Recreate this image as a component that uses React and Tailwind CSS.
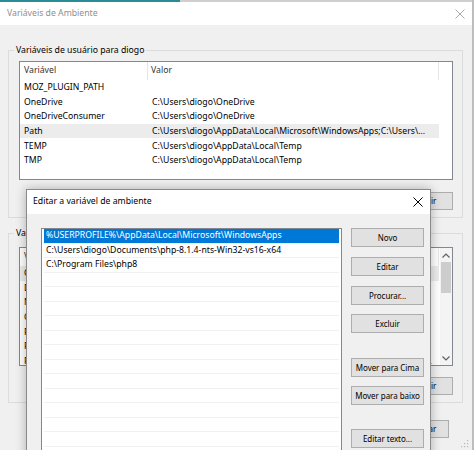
import React from 'react';

const userVars = [
  ['MOZ_PLUGIN_PATH', ''],
  ['OneDrive', 'C:\\Users\\diogo\\OneDrive'],
  ['OneDriveConsumer', 'C:\\Users\\diogo\\OneDrive'],
  ['Path', 'C:\\Users\\diogo\\AppData\\Local\\Microsoft\\WindowsApps;C:\\Users\\...'],
  ['TEMP', 'C:\\Users\\diogo\\AppData\\Local\\Temp'],
  ['TMP', 'C:\\Users\\diogo\\AppData\\Local\\Temp'],
];

const systemVars = [
  ['ComSpec', 'C:\\WINDOWS\\system32\\cmd.exe'],
  ['DriverData', 'C:\\Windows\\System32\\Drivers\\DriverData'],
  ['NUMBER_OF_PROCESSORS', '8'],
  ['OS', 'Windows_NT'],
  ['PATHEXT', '.COM;.EXE;.BAT;.CMD;.VBS;.VBE;.JS;.JSE;.WSF;.WSH;.MSC'],
  ['PROCESSOR_ARCHITECTURE', 'AMD64'],
  ['PSModulePath', '%ProgramFiles%\\WindowsPowerShell\\Modules;C:\\WINDOWS\\system32\\WindowsPowerShell\\v1.0\\Modules'],
];

const pathEntries = [
  '%USERPROFILE%\\AppData\\Local\\Microsoft\\WindowsApps',
  'C:\\Users\\diogo\\Documents\\php-8.1.4-nts-Win32-vs16-x64',
  'C:\\Program Files\\php8',
];

const CloseIcon = ({ className }) => (
  <svg viewBox="0 0 10 10" className={className} fill="none" stroke="currentColor" strokeWidth="1">
    <path d="M0.5 0.5 L9.5 9.5 M9.5 0.5 L0.5 9.5" />
  </svg>
);

const Chevron = ({ up }) => (
  <svg viewBox="0 0 8 5" className="h-[5px] w-[8px]" fill="none" stroke="#606060" strokeWidth="1.2">
    <path d={up ? 'M0.5 4.5 L4 1 L7.5 4.5' : 'M0.5 0.5 L4 4 L7.5 0.5'} />
  </svg>
);

const Button = ({ children, className = '' }) => (
  <button
    className={`flex items-center justify-center whitespace-nowrap border border-[#adadad] bg-[#e1e1e1] text-[8px] tracking-[-0.05px] text-black ${className}`}
  >
    {children}
  </button>
);

const Scrollbar = () => (
  <div className="flex w-[12px] flex-col items-center bg-[#f4f4f4]">
    <div className="flex h-[14px] items-center justify-center">
      <Chevron up />
    </div>
    <div className="h-[31px] w-[10px] bg-[#cdcdcd]" />
    <div className="flex-1" />
    <div className="flex h-[14px] items-center justify-center">
      <Chevron />
    </div>
  </div>
);

const ListView = ({ rows, selected, scroll }) => (
  <div className="flex h-[119px] overflow-hidden border border-[#828790] bg-white">
    <div className="flex min-w-0 flex-1 flex-col">
      <div className="flex h-[18px] shrink-0 text-[#333]">
        <div className="flex w-[128px] items-center border-r border-[#e5e5e5] pl-[4px]">Variável</div>
        <div className="flex w-[291px] items-center border-r border-[#e5e5e5] pl-[3px]">Valor</div>
      </div>
      {rows.map(([name, value], i) => (
        <div
          key={name}
          className={`flex h-[14.6px] w-[419px] shrink-0 items-center leading-[14px] ${i === selected ? 'bg-[#ececec]' : ''}`}
        >
          <div className="w-[128px] truncate pl-[4px]">{name}</div>
          <div className="w-[291px] truncate pl-[4px] pr-[2px]">{value}</div>
        </div>
      ))}
    </div>
    {scroll && <Scrollbar />}
  </div>
);

const GroupBox = ({ label, className = '', children }) => (
  <div className={`relative flex flex-col border border-[#dcdcdc] ${className}`}>
    <span className="absolute left-[5px] top-[-8px] bg-[#f0f0f0] px-[2px] leading-[14px] text-black">{label}</span>
    {children}
  </div>
);

const ResizeGrip = () => (
  <svg viewBox="0 0 8 8" className="absolute bottom-[2px] right-[3px] h-[8px] w-[8px]" fill="#b8b8b8">
    <rect x="6" y="0" width="1.2" height="1.2" />
    <rect x="3" y="3" width="1.2" height="1.2" />
    <rect x="6" y="3" width="1.2" height="1.2" />
    <rect x="0" y="6" width="1.2" height="1.2" />
    <rect x="3" y="6" width="1.2" height="1.2" />
    <rect x="6" y="6" width="1.2" height="1.2" />
  </svg>
);

const EnvWindow = () => (
  <div className="absolute left-0 top-0 flex h-[450px] w-[472px] flex-col bg-[#f0f0f0]">
    <div className="flex h-[2px]">
      <div className="w-[180px] bg-[#2a8c95]" />
      <div className="flex-1 bg-[#cfcfcf]" />
    </div>
    <div className="flex h-[23px] items-center justify-between bg-white pl-[7px] pr-[7px] text-[#8f8f8f]">
      <span>Variáveis de Ambiente</span>
      <CloseIcon className="h-[10px] w-[10px] text-[#a8a8a8]" />
    </div>
    <div className="flex flex-col pl-[8px] pr-[9px] pt-[25px]">
      <GroupBox label="Variáveis de usuário para diogo" className="h-[168px] pl-[10px] pr-[9px] pt-[10px]">
        <ListView rows={userVars} selected={3} />
        <div className="mt-[12px] flex justify-end gap-[6px]">
          <Button className="h-[18px] w-[58px]">Novo...</Button>
          <Button className="h-[18px] w-[58px]">Editar...</Button>
          <Button className="h-[18px] w-[58px]">Excluir</Button>
        </div>
      </GroupBox>
      <GroupBox label="Variáveis do sistema" className="mt-[15px] h-[170px] pl-[10px] pr-[9px] pt-[13px]">
        <ListView rows={systemVars} selected={0} scroll />
        <div className="mt-[11px] flex justify-end gap-[6px]">
          <Button className="h-[18px] w-[58px]">Novo...</Button>
          <Button className="h-[18px] w-[58px]">Editar...</Button>
          <Button className="h-[18px] w-[58px]">Excluir</Button>
        </div>
      </GroupBox>
      <div className="mt-[17px] flex justify-end gap-[6px] pr-[14px]">
        <Button className="h-[18px] w-[58px]">OK</Button>
        <Button className="h-[18px] w-[58px]">Cancelar</Button>
      </div>
    </div>
    <ResizeGrip />
  </div>
);

const EditDialog = () => (
  <div className="absolute left-[26px] top-[189px] flex h-[290px] w-[405px] flex-col border border-[#8a8a8a] bg-[#f0f0f0] shadow-[0_0_10px_rgba(0,0,0,0.28)]">
    <div className="flex h-[24px] shrink-0 items-center justify-between bg-white pl-[6px] pr-[7px] text-black">
      <span>Editar a variável de ambiente</span>
      <CloseIcon className="h-[10px] w-[10px] text-black" />
    </div>
    <div className="flex gap-[9px] pl-[14px] pr-[6px] pt-[14px]">
      <div className="flex h-[250px] min-w-0 flex-1 flex-col border border-[#828790] bg-white px-[2px]">
        {Array.from({ length: 17 }).map((_, i) => (
          <div key={i} className="h-[14.5px] shrink-0 border-b border-[#f0f0f0]">
            {pathEntries[i] && (
              <div
                className={`flex h-full items-center whitespace-nowrap pl-[2px] leading-[13px] ${
                  i === 0 ? 'bg-[#0078d7] text-white' : 'text-black'
                }`}
              >
                {pathEntries[i]}
              </div>
            )}
          </div>
        ))}
      </div>
      <div className="flex w-[73px] shrink-0 flex-col">
        <Button className="h-[19px]">Novo</Button>
        <Button className="mt-[10px] h-[19px]">Editar</Button>
        <Button className="mt-[10px] h-[19px]">Procurar...</Button>
        <Button className="mt-[9px] h-[19px]">Excluir</Button>
        <Button className="mt-[25px] h-[19px]">Mover para Cima</Button>
        <Button className="mt-[9px] h-[19px]">Mover para baixo</Button>
        <Button className="mt-[24px] h-[19px]">Editar texto...</Button>
      </div>
    </div>
  </div>
);

export default function App() {
  return (
    <div className="relative h-[450px] w-[474px] overflow-hidden bg-[#bdbdbd] font-['Noto_Sans',sans-serif] text-[8.7px] text-black">
      <EnvWindow />
      <EditDialog />
    </div>
  );
}
